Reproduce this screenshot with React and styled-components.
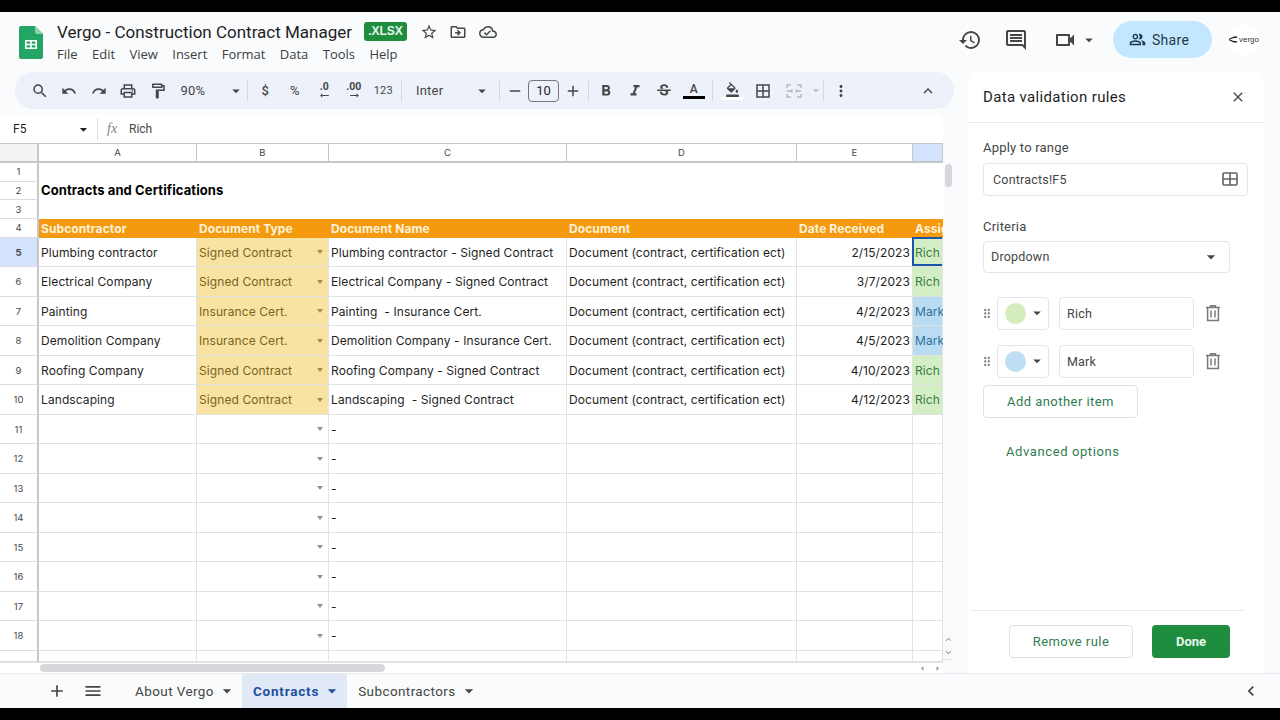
import React from 'react'
import styled, { createGlobalStyle } from 'styled-components'
import {
  MdSearch, MdUndo, MdRedo, MdOutlinePrint, MdOutlineFormatPaint, MdArrowDropDown, MdRemove, MdAdd,
  MdFormatBold, MdFormatItalic, MdStrikethroughS, MdOutlineFormatColorFill, MdBorderAll, MdOutlineMoreVert,
  MdExpandLess, MdStarBorder, MdOutlineDriveFileMove, MdOutlineCloudDone, MdHistory, MdOutlineComment,
  MdOutlineVideocam, MdOutlinePeopleAlt, MdClose, MdDragIndicator, MdMenu, MdChevronLeft,
  MdArrowRightAlt, MdKeyboardArrowUp, MdKeyboardArrowDown, MdArrowLeft, MdArrowRight,
} from 'react-icons/md'

const UI_FONT = '"Open Sans", Roboto, sans-serif'
const SHEET_FONT = 'Inter, "Liberation Sans", sans-serif'

const GlobalStyle = createGlobalStyle`
  html, body { margin: 0; padding: 0; background: #000; }
  * { box-sizing: border-box; }
`

const Frame = styled.div`
  width: 1280px;
  height: 720px;
  padding: 12px 0;
  background: #000;
  overflow: hidden;
  font-family: ${UI_FONT};
`

const Page = styled.div`
  height: 696px;
  display: flex;
  flex-direction: column;
  background: #f9fbfd;
  color: #444746;
`

const Header = styled.header`
  height: 60px;
  flex: none;
  display: flex;
  align-items: flex-start;
`

const Logo = styled.svg`
  width: 24px;
  height: 33px;
  margin: 14px 14px 0 19px;
  flex: none;
`

const TitleBlock = styled.div`
  width: 880px;
  flex: none;
  padding-top: 8px;
`

const TitleRow = styled.div`
  display: flex;
  align-items: center;
  height: 23px;
`

const DocTitle = styled.div`
  font-family: Roboto, sans-serif;
  font-size: 17px;
  color: #1f1f1f;
  white-space: nowrap;
  width: 307px;
`

const Badge = styled.div`
  width: 43px;
  height: 19px;
  border-radius: 3px;
  background: #1e8e3e;
  color: #e6f4ea;
  font: 700 12px "Liberation Sans", sans-serif;
  line-height: 19px;
  text-align: center;
  margin-right: 7px;
`

const TitleIcon = styled.span`
  display: flex;
  width: 29.5px;
  justify-content: center;
  font-size: 18px;
  color: #444746;
`

const MenuRow = styled.nav`
  display: flex;
  gap: 14.4px;
  margin-top: 2px;
  font-size: 13px;
  line-height: 18px;
  color: #3c4043;
`

const HeaderActions = styled.div`
  flex: 1;
  display: flex;
  align-items: center;
  height: 37px;
  margin-top: 9px;
  margin-left: 21px;
`

const HeadIcon = styled.span`
  display: flex;
  justify-content: center;
  width: ${p => p.$w || 24}px;
  margin-right: ${p => p.$mr || 0}px;
  font-size: ${p => p.$size || 24}px;
  color: #444746;
`

const ShareButton = styled.div`
  width: 99px;
  height: 37px;
  padding-left: 16px;
  border-radius: 19px;
  background: #c2e7ff;
  color: #1f3a4d;
  display: flex;
  align-items: center;
  gap: 6px;
  font: 400 14px Roboto, sans-serif;
  letter-spacing: 0.3px;
  margin-right: 16px;
`

const Account = styled.div`
  width: 32px;
  height: 32px;
  border-radius: 50%;
  background: #fff;
  display: flex;
  align-items: center;
  justify-content: center;
  gap: 1px;
  font: 8px "Liberation Sans", sans-serif;
  color: #333;
`

const Main = styled.div`
  flex: 1;
  min-height: 0;
  display: flex;
`

const LeftColumn = styled.div`
  width: 955px;
  flex: none;
  display: flex;
  flex-direction: column;
`

const Toolbar = styled.div`
  height: 37px;
  flex: none;
  margin-left: 15px;
  margin-right: 1px;
  padding-left: 10px;
  border-radius: 18px;
  background: #edf2fa;
  display: flex;
  align-items: center;
`

const ToolButton = styled.div`
  width: ${p => p.$w || 29.5}px;
  height: 29px;
  flex: none;
  margin-left: ${p => p.$ml || 0}px;
  display: flex;
  align-items: center;
  justify-content: ${p => p.$between ? 'space-between' : 'center'};
  padding: ${p => p.$between ? '0 0 0 8px' : '0'};
  font-size: ${p => p.$size || 18}px;
  color: ${p => p.$off ? '#b4b8bc' : '#444746'};
`

const ToolText = styled.span`
  font: ${p => p.$weight || 400} ${p => p.$size || 13}px Roboto, sans-serif;
  letter-spacing: 0.2px;
  color: #444746;
`

const ToolSep = styled.div`
  width: 1px;
  height: 20px;
  flex: none;
  background: #d5d9dd;
  margin: 0 ${p => p.$mr ?? 2}px 0 ${p => p.$ml ?? 2}px;
`

const SizeBox = styled.div`
  width: 31px;
  height: 22px;
  flex: none;
  border: 1px solid #747775;
  border-radius: 4px;
  font: 13px Roboto, sans-serif;
  line-height: 20px;
  text-align: center;
  color: #1f1f1f;
`

const DecimalIcon = styled.span`
  position: relative;
  display: inline-block;
  width: 22px;
  height: 22px;
  font: 700 10.5px/14px Roboto, sans-serif;
  text-align: center;
  color: #444746;
`

const DecimalArrow = styled.span`
  position: absolute;
  left: 5px;
  top: 9px;
  font-size: 13px;
  line-height: 13px;
  transform: ${p => p.$flip ? 'scaleX(-1)' : 'none'};
`

const ColorIcon = styled.span`
  width: 22px;
  display: flex;
  flex-direction: column;
  align-items: center;
  font: 500 12px/14px Roboto, sans-serif;
  color: #444746;
`

const ColorBar = styled.span`
  width: 22px;
  height: 3px;
  background: ${p => p.$color};
`

const FormulaBar = styled.div`
  height: 28px;
  flex: none;
  margin-top: 6px;
  margin-right: 12px;
  background: #fff;
  border-radius: 0 8px 0 0;
  display: flex;
  align-items: center;
  font: 12px Roboto, sans-serif;
  color: #444746;
`

const NameBox = styled.div`
  width: 98px;
  height: 22px;
  padding-left: 13px;
  padding-right: 5px;
  display: flex;
  align-items: center;
  justify-content: space-between;
  border-right: 1px solid #dadce0;
  color: #1f1f1f;
  font-size: 12px;
`

const Fx = styled.span`
  width: 31px;
  padding-left: 9px;
  font: italic 14px "Liberation Serif", serif;
  color: #80868b;
`

const SheetArea = styled.div`
  flex: 1;
  min-height: 0;
  display: flex;
  flex-direction: column;
`

const SheetRow = styled.div`
  height: 519px;
  flex: none;
  display: flex;
`

const Grid = styled.div`
  width: 943px;
  flex: none;
  display: grid;
  grid-template-columns: 39px 158px 132px 238px 230px 116px 30px;
  grid-template-rows: 20px repeat(3, 18.67px) 19px repeat(14, 29.5px) 11px;
  background: #fff;
  overflow: hidden;
  font-family: ${SHEET_FONT};
  font-size: 12px;
  letter-spacing: 0.09px;
  color: #1f1f1f;
`

const Corner = styled.div`
  background: #f3f3f3;
  border-right: 2px solid #c4c7c5;
  border-bottom: 2px solid #c4c7c5;
  border-top: 1px solid #c4c7c5;
`

const ColHead = styled.div`
  background: ${p => p.$active ? '#d3e3fd' : '#fff'};
  border-top: 1px solid #c4c7c5;
  border-right: 1px solid #c4c7c5;
  border-bottom: 2px solid #c4c7c5;
  font-size: 9.5px;
  color: #444746;
  display: flex;
  align-items: center;
  justify-content: center;
`

const RowHead = styled.div`
  background: ${p => p.$active ? '#d3e3fd' : '#fff'};
  border-right: 2px solid #c4c7c5;
  border-bottom: 1px solid #dadce0;
  font-size: 9.5px;
  font-weight: ${p => p.$active ? 700 : 400};
  color: #444746;
  display: flex;
  align-items: center;
  justify-content: center;
`

const Cell = styled.div`
  position: relative;
  padding: 0 2px;
  display: flex;
  align-items: center;
  justify-content: ${p => p.$right ? 'flex-end' : 'flex-start'};
  white-space: pre;
  min-width: 0;
  background: ${p => p.$bg || '#fff'};
  color: ${p => p.$color || '#1f1f1f'};
  border-right: 1px solid ${p => p.$plain ? 'transparent' : '#e1e3e1'};
  border-bottom: 1px solid ${p => p.$plain ? 'transparent' : '#e1e3e1'};
`

const TitleCell = styled(Cell)`
  z-index: 1;
  background: transparent;
  font-weight: 700;
  font-size: 13px;
  letter-spacing: 0.1px;
  color: #000;
`

const HeadCell = styled.div`
  background: #f59a0f;
  color: #fdf3dc;
  font-weight: 700;
  padding-left: 2px;
  white-space: nowrap;
  overflow: hidden;
  display: flex;
  align-items: center;
`

const CellArrow = styled.span`
  position: absolute;
  right: 5px;
  top: 50%;
  margin-top: -2px;
  width: 0;
  height: 0;
  border-left: 3.5px solid transparent;
  border-right: 3.5px solid transparent;
  border-top: 4px solid ${p => p.$color || '#8f9296'};
`

const Selection = styled.div`
  position: absolute;
  inset: -1px 0 0 -1px;
  border: 2px solid #1a57a8;
  border-right: none;
`

const VScroll = styled.div`
  width: 12px;
  flex: none;
  display: flex;
  flex-direction: column;
  background: #f9fbfd;
`

const VThumb = styled.div`
  width: 7px;
  height: 23px;
  margin: 21px 0 0 2px;
  border-radius: 4px;
  background: #d5d7da;
`

const VArrows = styled.div`
  margin-top: auto;
  width: 10px;
  margin-bottom: 2px;
  height: 27px;
  background: #f9f9f9;
  display: flex;
  flex-direction: column;
  font-size: 11px;
  color: #8f9296;
  align-items: center;
  justify-content: space-around;
  border-bottom: 1px solid #e1e3e1;
`

const HScroll = styled.div`
  height: 11px;
  width: 943px;
  flex: none;
  background: #fff;
  border-top: 1px solid #e1e3e1;
  display: flex;
  align-items: center;
  padding-left: 40px;
`

const HThumb = styled.div`
  width: 345px;
  height: 8px;
  border-radius: 4px;
  background: #d5d7da;
`

const HArrows = styled.div`
  margin-left: auto;
  display: flex;
  width: 26px;
  font-size: 11px;
  color: #8f9296;
  justify-content: space-between;
`

const Panel = styled.aside`
  width: 296px;
  flex: none;
  margin-left: 13px;
  background: #fff;
  border-radius: 8px 8px 0 0;
  display: flex;
  flex-direction: column;
  font-family: Roboto, sans-serif;
  height: 601px;
`

const PanelHeader = styled.div`
  height: 51px;
  flex: none;
  display: flex;
  align-items: center;
  justify-content: space-between;
  padding: 0 18px 1px 15px;
  border-bottom: 1px solid #e8eaed;
  font-size: 15px;
  letter-spacing: 0.35px;
  color: #1f1f1f;
`

const PanelClose = styled.span`
  display: flex;
  font-size: 16px;
  color: #444746;
`

const PanelBody = styled.div`
  flex: 1;
  padding: 16.5px 15px 0;
`

const FieldLabel = styled.div`
  font-size: 13px;
  letter-spacing: 0.2px;
  line-height: 16px;
  color: #444746;
  margin-top: ${p => p.$mt || 0}px;
  margin-bottom: ${p => p.$mb ?? 7}px;
`

const InputBox = styled.div`
  width: ${p => p.$w}px;
  height: ${p => p.$h || 33}px;
  flex: none;
  margin-left: ${p => p.$ml || 0}px;
  border: 1px solid #e3e5e8;
  border-radius: 4px;
  display: flex;
  align-items: center;
  justify-content: space-between;
  padding: 0 ${p => p.$pr ?? 8}px 0 ${p => p.$pl ?? 7}px;
  font-size: 12.5px;
  letter-spacing: 0.2px;
  color: #444746;
`

const BoxIcon = styled.span`
  display: flex;
  font-size: ${p => p.$size || 18}px;
  color: ${p => p.$color || '#5f6368'};
`

const ItemRow = styled.div`
  display: flex;
  align-items: center;
  margin-top: ${p => p.$mt}px;
  height: 33px;
`

const Swatch = styled.span`
  width: 21px;
  height: 21px;
  border-radius: 50%;
  background: ${p => p.$color};
`

const Drag = styled.span`
  display: flex;
  width: 14px;
  justify-content: center;
  font-size: 21px;
  color: #80868b;
  margin-left: -3.5px;
  margin-right: 3.5px;
`

const Trash = styled.svg`
  width: 18px;
  height: 18px;
  flex: none;
  margin-left: 10px;
`

const OutlineButton = styled.div`
  width: ${p => p.$w}px;
  height: 33px;
  flex: none;
  border: 1px solid #dfe1e5;
  border-radius: 4px;
  background: #fff;
  display: flex;
  align-items: center;
  justify-content: center;
  font-size: 13px;
  letter-spacing: 0.45px;
  color: #2f7d4f;
  margin-top: ${p => p.$mt || 0}px;
`

const TextLink = styled.div`
  margin: 25px 0 0 23px;
  font-size: 13px;
  line-height: 18px;
  letter-spacing: 0.6px;
  color: #2f7d4f;
`

const PanelFooter = styled.div`
  height: 63px;
  flex: none;
  margin: 0 20px 0 2px;
  border-top: 1px solid #e8eaed;
  display: flex;
  justify-content: flex-end;
  padding: 14px 14px 0 0;
  gap: 19px;
`

const DoneButton = styled.div`
  width: 78px;
  height: 33px;
  border-radius: 4px;
  background: #1e8e3e;
  color: #e8f5ec;
  font-size: 13px;
  font-weight: 700;
  display: flex;
  align-items: center;
  justify-content: center;
`

const TabBar = styled.footer`
  height: 35px;
  flex: none;
  border-top: 1px solid #e8eaed;
  display: flex;
  align-items: center;
  font-family: Roboto, sans-serif;
  padding-left: 46px;
`

const BarIcon = styled.span`
  display: flex;
  width: 22px;
  justify-content: center;
  font-size: 20px;
  color: #444746;
  margin-right: ${p => p.$mr || 0}px;
`

const Tab = styled.div`
  height: 34px;
  display: flex;
  align-items: center;
  padding: 0 5px 0 11px;
  gap: 3px;
  font-size: 13.5px;
  letter-spacing: ${p => p.$active ? 0.8 : 0.4}px;
  font-weight: ${p => p.$active ? 700 : 400};
  background: ${p => p.$active ? '#e1e9f7' : 'transparent'};
  color: ${p => p.$active ? '#1d4f9c' : '#444746'};
`

const TabArrow = styled.span`
  display: flex;
  font-size: 20px;
`

const TabChevron = styled.span`
  margin-left: auto;
  margin-right: 19px;
  display: flex;
  font-size: 20px;
  color: #444746;
`

const columns = ['A', 'B', 'C', 'D', 'E', '']
const headings = ['Subcontractor', 'Document Type', 'Document Name', 'Document', 'Date Received', 'Assigned']
const people = {
  Rich: { bg: '#d3edc4', color: '#3c7d3f' },
  Mark: { bg: '#b9dcf2', color: '#2e6f9e' },
}
const docText = 'Document (contract, certification ect)'
const rows = [
  ['Plumbing contractor', 'Signed Contract', 'Plumbing contractor - Signed Contract', '2/15/2023', 'Rich'],
  ['Electrical Company', 'Signed Contract', 'Electrical Company - Signed Contract', '3/7/2023', 'Rich'],
  ['Painting', 'Insurance Cert.', 'Painting  - Insurance Cert.', '4/2/2023', 'Mark'],
  ['Demolition Company', 'Insurance Cert.', 'Demolition Company - Insurance Cert.', '4/5/2023', 'Mark'],
  ['Roofing Company', 'Signed Contract', 'Roofing Company - Signed Contract', '4/10/2023', 'Rich'],
  ['Landscaping', 'Signed Contract', 'Landscaping  - Signed Contract', '4/12/2023', 'Rich'],
]
const emptyRows = [11, 12, 13, 14, 15, 16, 17, 18]
const menus = ['File', 'Edit', 'View', 'Insert', 'Format', 'Data', 'Tools', 'Help']
const items = [
  { label: 'Rich', color: '#d5ecbc', mt: 24 },
  { label: 'Mark', color: '#bfe0f4', mt: 15 },
]

function SheetsLogo() {
  return (
    <Logo viewBox="0 0 24 33">
      <path d="M2 0h14l8 8v23a2 2 0 0 1-2 2H2a2 2 0 0 1-2-2V2a2 2 0 0 1 2-2z" fill="#23a566" />
      <path d="M16 0l8 8h-6a2 2 0 0 1-2-2z" fill="#8ed1b1" />
      <path d="M6 14h12v9H6z M7.6 15.6v2.1h3.6v-2.1z M12.8 15.6v2.1h3.6v-2.1z M7.6 19.3v2.1h3.6v-2.1z M12.8 19.3v2.1h3.6v-2.1z" fill="#fff" fillRule="evenodd" />
    </Logo>
  )
}

function VergoMark() {
  return (
    <svg width="9" height="7" viewBox="0 0 9 7">
      <path d="M0 3.5L4 1.5M0 3.5L4 5.5M4 1.5L8 1M4 5.5L8 6" stroke="#222" strokeWidth="1.3" fill="none" />
    </svg>
  )
}

function MergeIcon() {
  return (
    <svg width="18" height="18" viewBox="0 0 18 18" fill="none" stroke="#b4b8bc" strokeWidth="1.4">
      <path d="M2 6V3h4M16 6V3h-4M2 12v3h4M16 12v3h-4M2 9h4M16 9h-4M7.5 7.5L6 9l1.5 1.5M10.5 7.5L12 9l-1.5 1.5" />
    </svg>
  )
}

function RangeIcon() {
  return (
    <svg width="16" height="14" viewBox="0 0 16 14" fill="none" stroke="#5f6368" strokeWidth="1.6">
      <rect x="1" y="1" width="14" height="12" rx="1" />
      <path d="M1 7h14M8 1v12" />
    </svg>
  )
}

function TrashIcon() {
  return (
    <Trash viewBox="0 0 18 18" fill="none" stroke="#77797c" strokeWidth="1.5">
      <path d="M2 3.5h14M6.5 3.5V1.8h5v1.7M3.6 3.5v13h10.8v-13M7 6.5v7M11 6.5v7" />
    </Trash>
  )
}

function DataRow({ num, row }) {
  const person = people[row[4]]
  const active = num === 5
  return (
    <>
      <RowHead $active={active}>{num}</RowHead>
      <Cell>{row[0]}</Cell>
      <Cell $bg="#f9e3a3" $color="#7a6420">
        {row[1]}
        <CellArrow $color="#a8904a" />
      </Cell>
      <Cell>{row[2]}</Cell>
      <Cell>{docText}</Cell>
      <Cell $right>{row[3]}</Cell>
      <Cell $bg={person.bg} $color={person.color}>
        {row[4]}
        {active && <Selection />}
      </Cell>
    </>
  )
}

function EmptyRow({ num }) {
  return (
    <>
      <RowHead>{num}</RowHead>
      <Cell />
      <Cell><CellArrow /></Cell>
      <Cell>-</Cell>
      <Cell />
      <Cell />
      <Cell />
    </>
  )
}

function App() {
  return (
    <Frame>
      <GlobalStyle />
      <Page>
        <Header>
          <SheetsLogo />
          <TitleBlock>
            <TitleRow>
              <DocTitle>Vergo - Construction Contract Manager</DocTitle>
              <Badge>.XLSX</Badge>
              <TitleIcon><MdStarBorder /></TitleIcon>
              <TitleIcon><MdOutlineDriveFileMove /></TitleIcon>
              <TitleIcon><MdOutlineCloudDone /></TitleIcon>
            </TitleRow>
            <MenuRow>
              {menus.map(m => <span key={m}>{m}</span>)}
            </MenuRow>
          </TitleBlock>
          <HeaderActions>
            <HeadIcon $mr={22}><MdHistory /></HeadIcon>
            <HeadIcon $mr={25}><MdOutlineComment /></HeadIcon>
            <HeadIcon $mr={0}><MdOutlineVideocam /></HeadIcon>
            <HeadIcon $w={24} $size={18} $mr={12}><MdArrowDropDown /></HeadIcon>
            <ShareButton><MdOutlinePeopleAlt size={17} />Share</ShareButton>
            <Account><VergoMark />vergo</Account>
          </HeaderActions>
        </Header>

        <Main>
          <LeftColumn>
            <Toolbar>
              <ToolButton><MdSearch /></ToolButton>
              <ToolButton $size={16}><MdUndo /></ToolButton>
              <ToolButton $size={16}><MdRedo /></ToolButton>
              <ToolButton><MdOutlinePrint /></ToolButton>
              <ToolButton><MdOutlineFormatPaint /></ToolButton>
              <ToolButton $w={72} $between><ToolText>90%</ToolText><MdArrowDropDown /></ToolButton>
              <ToolSep $ml={2} $mr={3} />
              <ToolButton><ToolText $weight={500}>$</ToolText></ToolButton>
              <ToolButton><ToolText>%</ToolText></ToolButton>
              <ToolButton>
                <DecimalIcon>.0<DecimalArrow $flip><MdArrowRightAlt /></DecimalArrow></DecimalIcon>
              </ToolButton>
              <ToolButton>
                <DecimalIcon>.00<DecimalArrow><MdArrowRightAlt /></DecimalArrow></DecimalIcon>
              </ToolButton>
              <ToolButton><ToolText $size={11}>123</ToolText></ToolButton>
              <ToolSep $ml={3} $mr={6} />
              <ToolButton $w={83} $between><ToolText>Inter</ToolText><MdArrowDropDown /></ToolButton>
              <ToolSep $ml={8} $mr={1} />
              <ToolButton $w={27}><MdRemove /></ToolButton>
              <SizeBox>10</SizeBox>
              <ToolButton $w={28}><MdAdd /></ToolButton>
              <ToolSep $ml={1} $mr={2} />
              <ToolButton $w={29}><MdFormatBold /></ToolButton>
              <ToolButton><MdFormatItalic /></ToolButton>
              <ToolButton><MdStrikethroughS /></ToolButton>
              <ToolButton>
                <ColorIcon>A<ColorBar $color="#000" /></ColorIcon>
              </ToolButton>
              <ToolSep $ml={3} $mr={5} />
              <ToolButton>
                <ColorIcon><MdOutlineFormatColorFill size={15} /><ColorBar $color="#fff" /></ColorIcon>
              </ToolButton>
              <ToolButton $w={32}><MdBorderAll /></ToolButton>
              <ToolButton $off><MergeIcon /></ToolButton>
              <ToolButton $off $w={14} $size={15}><MdArrowDropDown /></ToolButton>
              <ToolSep $ml={0} $mr={3} />
              <ToolButton $w={29}><MdOutlineMoreVert /></ToolButton>
              <ToolButton $w={58} $ml={43}><MdExpandLess /></ToolButton>
            </Toolbar>

            <FormulaBar>
              <NameBox>F5<MdArrowDropDown size={17} /></NameBox>
              <Fx>fx</Fx>
              Rich
            </FormulaBar>

            <SheetArea>
              <SheetRow>
                <Grid>
                  <Corner />
                  {columns.map(c => <ColHead key={c} $active={c === ''}>{c}</ColHead>)}

                  <RowHead>1</RowHead>
                  {columns.map(c => <Cell key={c} $plain />)}
                  <RowHead>2</RowHead>
                  <TitleCell $plain>Contracts and Certifications</TitleCell>
                  {columns.slice(1).map(c => <Cell key={c} $plain />)}
                  <RowHead>3</RowHead>
                  {columns.map(c => <Cell key={c} $plain />)}

                  <RowHead>4</RowHead>
                  {headings.map(h => <HeadCell key={h}>{h}</HeadCell>)}

                  {rows.map((r, i) => <DataRow key={r[0]} num={i + 5} row={r} />)}
                  {emptyRows.map(n => <EmptyRow key={n} num={n} />)}

                  <RowHead />
                  {columns.map(c => <Cell key={c} />)}
                </Grid>
                <VScroll>
                  <VThumb />
                  <VArrows>
                    <MdKeyboardArrowUp />
                    <MdKeyboardArrowDown />
                  </VArrows>
                </VScroll>
              </SheetRow>
              <HScroll>
                <HThumb />
                <HArrows>
                  <MdArrowLeft />
                  <MdArrowRight />
                </HArrows>
              </HScroll>
            </SheetArea>
          </LeftColumn>

          <Panel>
            <PanelHeader>
              Data validation rules
              <PanelClose><MdClose /></PanelClose>
            </PanelHeader>
            <PanelBody>
              <FieldLabel>Apply to range</FieldLabel>
              <InputBox $w={265} $pl={9} $pr={9}>
                Contracts!F5
                <RangeIcon />
              </InputBox>
              <FieldLabel $mt={23} $mb={6}>Criteria</FieldLabel>
              <InputBox $w={247} $h={32}>
                Dropdown
                <BoxIcon $size={20} $color="#444746"><MdArrowDropDown /></BoxIcon>
              </InputBox>
              {items.map(item => (
                <ItemRow key={item.label} $mt={item.mt}>
                  <Drag><MdDragIndicator /></Drag>
                  <InputBox $w={52} $pl={7} $pr={2}>
                    <Swatch $color={item.color} />
                    <BoxIcon $color="#444746"><MdArrowDropDown /></BoxIcon>
                  </InputBox>
                  <InputBox $w={135} $ml={10}>{item.label}</InputBox>
                  <TrashIcon />
                </ItemRow>
              ))}
              <OutlineButton $w={155} $mt={7}>Add another item</OutlineButton>
              <TextLink>Advanced options</TextLink>
            </PanelBody>
            <PanelFooter>
              <OutlineButton $w={124}>Remove rule</OutlineButton>
              <DoneButton>Done</DoneButton>
            </PanelFooter>
          </Panel>
        </Main>

        <TabBar>
          <BarIcon $mr={14}><MdAdd /></BarIcon>
          <BarIcon $mr={20}><MdMenu /></BarIcon>
          <Tab>About Vergo<TabArrow><MdArrowDropDown /></TabArrow></Tab>
          <Tab $active>Contracts<TabArrow><MdArrowDropDown /></TabArrow></Tab>
          <Tab>Subcontractors<TabArrow><MdArrowDropDown /></TabArrow></Tab>
          <TabChevron><MdChevronLeft /></TabChevron>
        </TabBar>
      </Page>
    </Frame>
  )
}

export default App
